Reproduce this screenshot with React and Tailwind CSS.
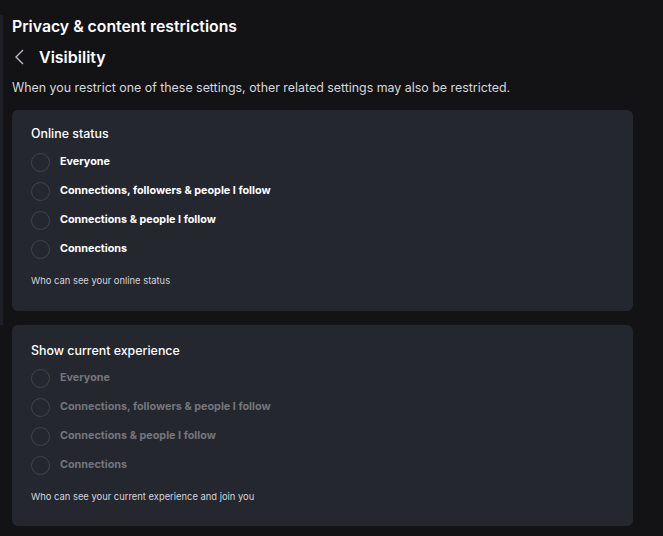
import React from "react";

const options = [
  "Everyone",
  "Connections, followers & people I follow",
  "Connections & people I follow",
  "Connections",
];

const Radio = ({ label, disabled }) => (
  <div className="flex items-center h-[29px]">
    <span className="w-[19px] h-[19px] rounded-full border border-[#43454c] shrink-0" />
    <span
      className={
        "ml-[10px] text-[10.8px] font-bold " +
        (disabled ? "text-[#74767c]" : "text-white")
      }
    >
      {label}
    </span>
  </div>
);

const Card = ({ title, helper, disabled }) => (
  <div
    className={
      "bg-[#25272e] rounded-[6px] pl-[19px] pr-4 " +
      (disabled ? "pt-[17px] pb-[22px]" : "pt-[15px] pb-[23px]")
    }
  >
    <div
      className={
        "text-[12.4px] leading-[18px] font-medium text-white " +
        (disabled ? "mb-[4px]" : "mb-[5px]")
      }
    >
      {title}
    </div>
    {options.map((o) => (
      <Radio key={o} label={o} disabled={disabled} />
    ))}
    <div className="mt-[10px] text-[9.4px] leading-[14px] text-[#d2d5dc]">
      {helper}
    </div>
  </div>
);

export default function App() {
  return (
    <div
      className="min-h-[536px] bg-[#131316] flex"
      style={{ fontFamily: "Inter, 'Noto Sans', sans-serif" }}
    >
      <div className="w-[3px] mt-[15px] h-[310px] bg-[#1f2025] shrink-0" />
      <div className="pl-[9px] w-[630px]">
        <h1 className="pt-[17px] text-[15.8px] leading-[20px] font-semibold text-white">
          Privacy &amp; content restrictions
        </h1>
        <div className="flex items-center mt-[9px] h-[22px]">
          <svg
            width="11"
            height="16"
            viewBox="0 0 11 16"
            fill="none"
            stroke="#b9bbc0"
            strokeWidth="1.4"
            className="ml-[2px]"
          >
            <path d="M9 1 L2 8 L9 15" />
          </svg>
          <span className="ml-[14px] text-[16px] font-semibold text-white">
            Visibility
          </span>
        </div>
        <p className="mt-[12px] text-[12.4px] leading-[16px] text-[#d6d8dd]">
          When you restrict one of these settings, other related settings may also be restricted.
        </p>
        <div className="mt-[14px] flex flex-col gap-[14px]">
          <Card title="Online status" helper="Who can see your online status" />
          <Card
            title="Show current experience"
            helper="Who can see your current experience and join you"
            disabled
          />
        </div>
      </div>
    </div>
  );
}
